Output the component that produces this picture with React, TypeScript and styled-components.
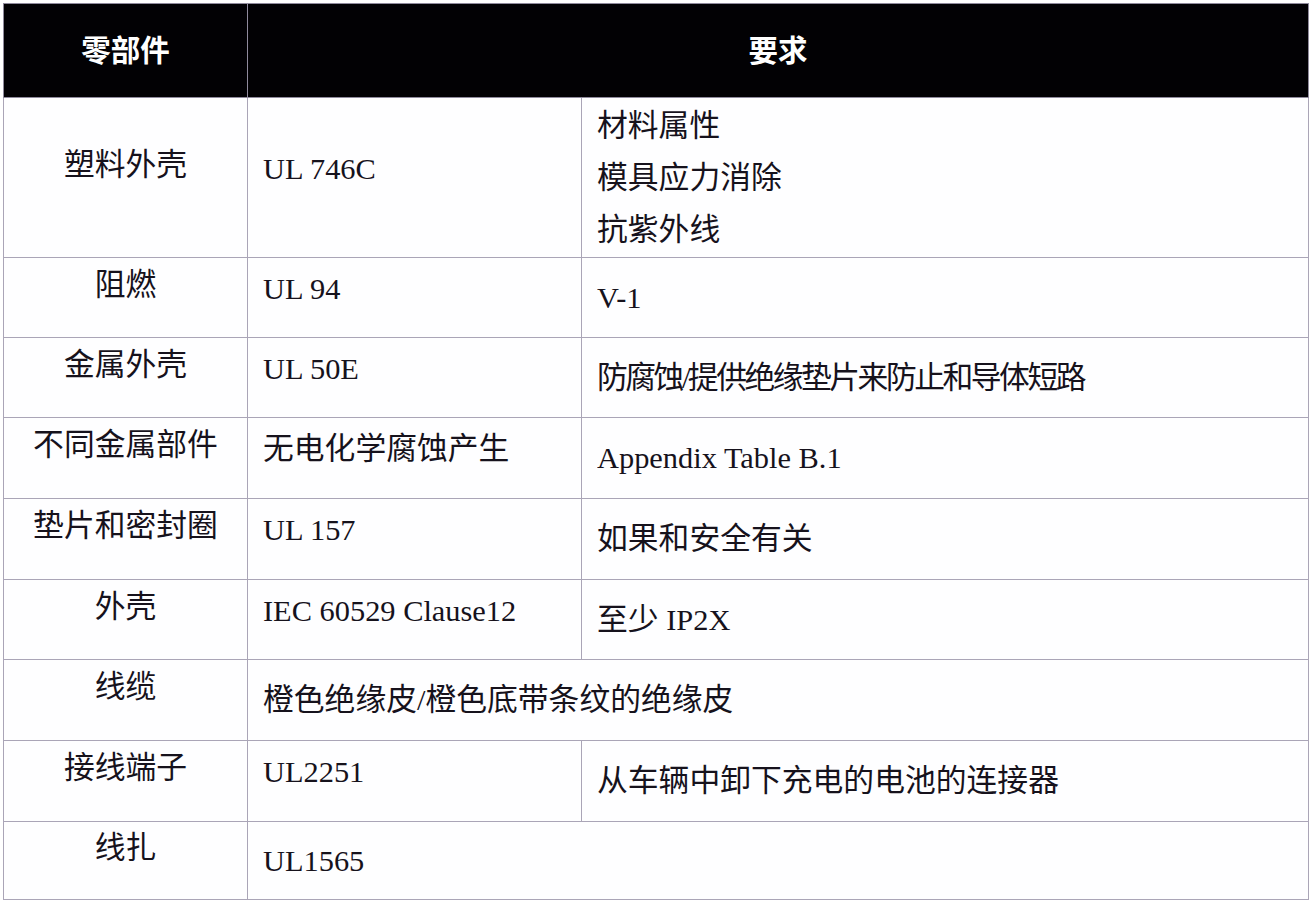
import styled, { createGlobalStyle } from 'styled-components';

const GlobalStyle = createGlobalStyle`
  html, body {
    margin: 0;
    padding: 0;
    background: #ffffff;
  }
  body {
    font-family: "Liberation Serif", "Noto Sans CJK SC", serif;
    color: #16121c;
  }
`;

type Row = {
  part: string;
  std: string;
  req?: string[];
  span?: boolean;
  tight?: boolean;
  height: number;
};

const ROWS: Row[] = [
  { part: '塑料外壳', std: 'UL 746C', req: ['材料属性', '模具应力消除', '抗紫外线'], height: 160 },
  { part: '阻燃', std: 'UL 94', req: ['V-1'], height: 80 },
  { part: '金属外壳', std: 'UL 50E', req: ['防腐蚀/提供绝缘垫片来防止和导体短路'], tight: true, height: 80 },
  { part: '不同金属部件', std: '无电化学腐蚀产生', req: ['Appendix Table B.1'], height: 81 },
  { part: '垫片和密封圈', std: 'UL 157', req: ['如果和安全有关'], height: 81 },
  { part: '外壳', std: 'IEC 60529 Clause12', req: ['至少 IP2X'], height: 80 },
  { part: '线缆', std: '橙色绝缘皮/橙色底带条纹的绝缘皮', span: true, height: 81 },
  { part: '接线端子', std: 'UL2251', req: ['从车辆中卸下充电的电池的连接器'], height: 81 },
  { part: '线扎', std: 'UL1565', span: true, height: 78 },
];

// the source mixes a sans CJK face with a Times-like face
const Mixed = ({ text }: { text: string }) => {
  const parts = text.match(/[\u3400-\u9fff]+|[^\u3400-\u9fff]+/g) ?? [];
  return (
    <>
      {parts.map((p, i) =>
        /[\u3400-\u9fff]/.test(p) ? <Han key={i}>{p}</Han> : <Latin key={i}>{p}</Latin>
      )}
    </>
  );
};

export default function App() {
  return (
    <>
      <GlobalStyle />
      <Page>
        <Table>
          <colgroup>
            <col style={{ width: 244 }} />
            <col style={{ width: 334 }} />
            <col style={{ width: 727 }} />
          </colgroup>
          <thead>
            <tr>
              <HeadCell>零部件</HeadCell>
              <HeadCell colSpan={2}>要求</HeadCell>
            </tr>
          </thead>
          <tbody>
            {ROWS.map((r) => (
              <BodyRow key={r.part} $h={r.height}>
                <PartCell>
                  <Mixed text={r.part} />
                </PartCell>
                {r.span ? (
                  <SpanCell colSpan={2}>
                    <Mixed text={r.std} />
                  </SpanCell>
                ) : (
                  <>
                    <StdCell>
                      <Mixed text={r.std} />
                    </StdCell>
                    <ReqCell $tight={r.tight}>
                      {r.req?.map((line) => (
                        <ReqLine key={line}>
                          <Mixed text={line} />
                        </ReqLine>
                      ))}
                    </ReqCell>
                  </>
                )}
              </BodyRow>
            ))}
          </tbody>
        </Table>
      </Page>
    </>
  );
}

const Page = styled.div`
  padding: 3px 0 0 3px;
`;

const Table = styled.table`
  width: 1306px;
  table-layout: fixed;
  border-collapse: collapse;
  font-size: 29px;
  font-family: "Liberation Serif", "Noto Sans CJK SC", serif;
  border: 1px solid #8f8a9c;
`;

const HeadCell = styled.th`
  height: 89px;
  padding: 0 0 4px;
  background: #020104;
  color: #ffffff;
  font-family: "Noto Sans CJK SC", sans-serif;
  font-weight: 700;
  font-size: 29.5px;
  line-height: 1.3;
  text-align: center;
  vertical-align: middle;
  border: 1px solid #8f8a9c;
`;

const BodyRow = styled.tr<{ $h: number }>`
  height: ${(p) => p.$h}px;
`;

const Cell = styled.td`
  padding: 0;
  border: 1px solid #aaa5b7;
  vertical-align: middle;
  line-height: 38px;
  background: #fefeff;
  white-space: nowrap;
`;

const PartCell = styled(Cell)`
  text-align: center;
  padding-bottom: 26px;
`;

const StdCell = styled(Cell)`
  padding-left: 15px;
  padding-bottom: 18px;
`;

const ReqCell = styled(Cell)<{ $tight?: boolean }>`
  padding-left: 15px;
  letter-spacing: ${(p) => (p.$tight ? '-2.5px' : 'normal')};
`;

const SpanCell = styled(Cell)`
  padding-left: 15px;
`;

const ReqLine = styled.div`
  height: 52px;
  line-height: 52px;
  overflow: hidden;
`;

const Han = styled.span`
  font-family: "Noto Sans CJK SC", sans-serif;
  font-size: 30.8px;
  line-height: 1;
`;

const Latin = styled.span`
  font-family: "Liberation Serif", serif;
  font-size: 30.4px;
  line-height: 1;
`;
